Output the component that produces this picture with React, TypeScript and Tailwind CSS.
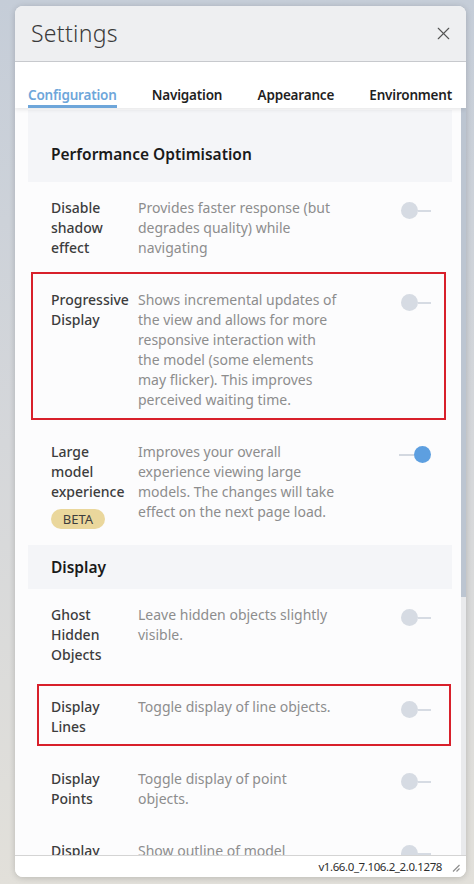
import React from 'react';
import { X } from 'lucide-react';

type Row = {
    label: string[];
    description: string;
    on?: boolean;
    beta?: boolean;
    highlight?: 'wide' | 'narrow';
};

const performanceRows: Row[] = [
    { label: ['Disable', 'shadow', 'effect'], description: 'Provides faster response (but degrades quality) while navigating' },
    {
        label: ['Progressive', 'Display'],
        description: 'Shows incremental updates of the view and allows for more responsive interaction with the model (some elements may flicker). This improves perceived waiting time.',
        highlight: 'wide',
    },
    {
        label: ['Large', 'model', 'experience'],
        description: 'Improves your overall experience viewing large models. The changes will take effect on the next page load.',
        on: true,
        beta: true,
    },
];

const displayRows: Row[] = [
    { label: ['Ghost', 'Hidden', 'Objects'], description: 'Leave hidden objects slightly visible.' },
    { label: ['Display', 'Lines'], description: 'Toggle display of line objects.', highlight: 'narrow' },
    { label: ['Display', 'Points'], description: 'Toggle display of point objects.' },
    { label: ['Display', 'Edges'], description: 'Show outline of model objects.' },
];

const tabs = ['Configuration', 'Navigation', 'Appearance', 'Environment'];

function Toggle({ on }: { on?: boolean }) {
    if (on) {
        return (
            <div className="flex items-center">
                <div className="w-[15px] h-[2px] bg-[#d3d8e0]" />
                <div className="w-[17px] h-[17px] rounded-full bg-[#5d9fe0]" />
            </div>
        );
    }
    return (
        <div className="flex items-center">
            <div className="w-[17px] h-[17px] rounded-full bg-[#d6dbe3]" />
            <div className="w-[13px] h-[2px] bg-[#d6dbe3]" />
        </div>
    );
}

function SettingRow({ row }: { row: Row }) {
    return (
        <div className="relative flex pl-[23px] py-4">
            {row.highlight === 'wide' && (
                <div className="absolute left-[3px] right-[6px] top-[-2px] bottom-[6px] border-2 border-[#d8202b]" />
            )}
            {row.highlight === 'narrow' && (
                <div className="absolute left-[9px] right-[1px] top-[3px] bottom-[7px] border-2 border-[#d8202b]" />
            )}
            <div className="w-[87px] shrink-0 text-[14px] leading-5 font-medium text-[#3d3d3d]">
                {row.label.map((l) => (
                    <div key={l}>{l}</div>
                ))}
                {row.beta && (
                    <div className="mt-[7px] w-[54px] h-5 rounded-full bg-[#ead79c] text-[13px] leading-5 text-[#3d3d3d] text-center font-normal">
                        BETA
                    </div>
                )}
            </div>
            <div className="w-[200px] text-[14px] leading-5 text-[#8d8d8d]">{row.description}</div>
            <div className="ml-auto mr-[21px] pt-[4px]">
                <Toggle on={row.on} />
            </div>
        </div>
    );
}

export default function App() {
    return (
        <div
            className="w-[474px] h-[884px] bg-gradient-to-b from-[#c5cdd8] via-[#d5d7da] to-[#e2e0da] pt-[6px] pl-[15px] overflow-hidden"
            style={{ fontFamily: '"Noto Sans", "Open Sans", sans-serif' }}
        >
            <div className="w-[451px] h-[871px] flex flex-col bg-[#fcfcfd] rounded-lg shadow-[0_1px_6px_rgba(0,0,0,0.18)] overflow-hidden">
                {/* Header */}
                <div className="h-[56px] shrink-0 bg-[#eeeff1] border-b border-[#c9cbcf] flex items-center justify-between pl-[16px] pr-[12px]">
                    <h1 className="text-[23px] font-light text-[#3a3a3a] tracking-[0.3px]">Settings</h1>
                    <X size={21} strokeWidth={1.3} className="text-[#555]" />
                </div>

                {/* Tabs */}
                <div className="relative z-10 h-[46px] shrink-0 bg-white shadow-[0_2px_4px_rgba(0,0,0,0.08)] flex items-end pl-[13px] pr-[14px] justify-between">
                    {tabs.map((t, i) => (
                        <div
                            key={t}
                            className={
                                i === 0
                                    ? 'border-b-[3px] border-[#6ea6da] text-[13.5px] leading-5 font-semibold text-[#6ea6da] tracking-[-0.2px]'
                                    : 'pb-[3px] text-[13.5px] leading-5 font-semibold text-[#1f1f1f] tracking-[-0.2px]'
                            }
                        >
                            {t}
                        </div>
                    ))}
                </div>

                {/* Content + scrollbar */}
                <div className="flex-1 flex min-h-0">
                    <div className="flex-1 overflow-hidden pl-[13px] pr-[9px] pt-[2px]">
                        <div className="bg-[#f4f5f8] pl-[23px] pt-[32px] pb-[16px] text-[15.5px] leading-6 font-semibold text-[#1a1a1a]">
                            Performance Optimisation
                        </div>
                        {performanceRows.map((r) => (
                            <SettingRow key={r.label.join(' ')} row={r} />
                        ))}
                        <div className="bg-[#f4f5f8] pl-[23px] py-[10px] text-[15.5px] leading-6 font-semibold text-[#1a1a1a]">
                            Display
                        </div>
                        {displayRows.map((r) => (
                            <SettingRow key={r.label.join(' ')} row={r} />
                        ))}
                    </div>
                    <div className="w-[5px] shrink-0 bg-[#e9eaec] flex flex-col">
                        <div className="h-[489px] bg-[#bcc5d1]" />
                    </div>
                </div>

                {/* Footer */}
                <div className="h-[22px] shrink-0 bg-white border-t border-[#d4d4d4] flex items-center justify-end pr-[6px]">
                    <span className="text-[11.5px] leading-4 tracking-[-0.4px] text-[#2e2e2e] whitespace-nowrap">
                        v1.66.0_7.106.2_2.0.1278
                    </span>
                    <svg width="8" height="8" viewBox="0 0 8 8" className="block ml-[10px] mt-[3px] shrink-0">
                        <path d="M7.5 1 L1 7.5 M7.5 4.5 L4.5 7.5" stroke="#8f8f8f" strokeWidth="1.2" fill="none" />
                    </svg>
                </div>
            </div>
        </div>
    );
}
